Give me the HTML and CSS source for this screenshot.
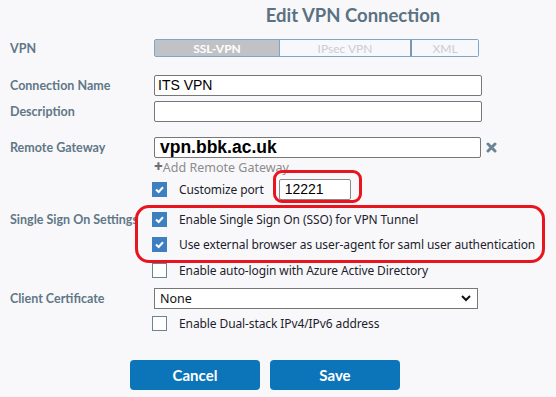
FILE: index.html
```html
<!DOCTYPE html>
<html>
<head>
<meta charset="utf-8">
<link rel="stylesheet" href="styles.css">
</head>
<body>
<div class="page">
  <h1 class="title">Edit VPN Connection</h1>

  <div class="row row-vpn">
    <div class="label">VPN</div>
    <div class="seg">
      <span class="seg-item seg-active">SSL-VPN</span>
      <span class="seg-item seg-ipsec">IPsec VPN</span>
      <span class="seg-item seg-xml">XML</span>
    </div>
  </div>

  <div class="row row-name">
    <div class="label">Connection Name</div>
    <div class="input">ITS VPN</div>
  </div>

  <div class="row row-desc">
    <div class="label">Description</div>
    <div class="input"></div>
  </div>

  <div class="row row-gw">
    <div class="label">Remote Gateway</div>
    <div class="input input-gw">vpn.bbk.ac.uk</div>
    <svg class="xicon" width="11" height="11" viewBox="0 0 11 11"><path d="M2 2 L9 9 M9 2 L2 9" stroke="#6b8595" stroke-width="3" stroke-linecap="round"/></svg>
  </div>

  <div class="row row-add">
    <div class="label"></div>
    <div class="add"><span class="plus">+</span>Add Remote Gateway</div>
  </div>

  <div class="row row-port">
    <div class="label"></div>
    <span class="cb cb-on"><svg width="15" height="15" viewBox="0 0 15 15"><path d="M4 7.5 L6.6 10 L11 5.2" fill="none" stroke="#fff" stroke-width="2"/></svg></span>
    <span class="cbtext">Customize port</span>
    <div class="input input-port">12221</div>
  </div>

  <div class="row row-sso">
    <div class="label">Single Sign On Settings</div>
    <span class="cb cb-on"><svg width="15" height="15" viewBox="0 0 15 15"><path d="M4 7.5 L6.6 10 L11 5.2" fill="none" stroke="#fff" stroke-width="2"/></svg></span>
    <span class="cbtext">Enable Single Sign On (SSO) for VPN Tunnel</span>
  </div>

  <div class="row row-ext">
    <div class="label"></div>
    <span class="cb cb-on"><svg width="15" height="15" viewBox="0 0 15 15"><path d="M4 7.5 L6.6 10 L11 5.2" fill="none" stroke="#fff" stroke-width="2"/></svg></span>
    <span class="cbtext">Use external browser as user-agent for saml user authentication</span>
  </div>

  <div class="row row-auto">
    <div class="label"></div>
    <span class="cb"></span>
    <span class="cbtext">Enable auto-login with Azure Active Directory</span>
  </div>

  <div class="row row-cert">
    <div class="label">Client Certificate</div>
    <div class="select">None<svg class="chev" width="10" height="7" viewBox="0 0 10 7"><path d="M1 1 L5 5 L9 1" fill="none" stroke="#111" stroke-width="2"/></svg></div>
  </div>

  <div class="row row-dual">
    <div class="label"></div>
    <span class="cb"></span>
    <span class="cbtext">Enable Dual-stack IPv4/IPv6 address</span>
  </div>

  <div class="buttons">
    <button class="btn">Cancel</button>
    <button class="btn">Save</button>
  </div>

  <div class="mark mark-port"></div>
  <div class="mark mark-sso"></div>
</div>
</body>
</html>
```

FILE: styles.css
```css
html, body {
  margin: 0;
  padding: 0;
  background: #f8f8fb;
  width: 556px;
  height: 397px;
  overflow: hidden;
}
.page {
  position: relative;
  width: 556px;
  height: 397px;
  font-family: "Noto Sans", sans-serif;
}
.title {
  margin: 0;
  padding: 3px 0 0 150px;
  height: 24px;
  text-align: center;
  font-family: Lato, sans-serif;
  font-weight: 700;
  font-size: 18.5px;
  line-height: 24px;
  color: #5b7282;
}
.row {
  display: flex;
  align-items: center;
  padding-left: 10px;
}
.label {
  width: 144px;
  flex: none;
  font-family: Lato, sans-serif;
  font-weight: 700;
  font-size: 12.5px;
  color: #5f7786;
  white-space: nowrap;
}
.row-vpn { margin-top: 12px; height: 18px; }
.seg {
  display: flex;
  width: 323px;
  height: 16px;
  border: 1px solid #7fa6c4;
  border-radius: 2px;
  font-family: Lato, sans-serif;
  font-size: 12px;
}
.seg-item {
  display: flex;
  align-items: center;
  justify-content: center;
  color: #c9ccd2;
  background: #f7f8fb;
}
.seg-active {
  width: 124px;
  background: #c1c2c6;
  color: #fff;
  font-weight: 700;
}
.seg-ipsec {
  width: 130px;
  border-left: 1px solid #7fa6c4;
  border-right: 2px solid #7b97ab;
}
.seg-xml { flex: 1; }

.input {
  box-sizing: border-box;
  width: 328px;
  height: 21px;
  border: 1px solid #777;
  border-radius: 2px;
  background: #fff;
  font-family: "Liberation Sans", sans-serif;
  font-size: 14px;
  line-height: 19px;
  padding-left: 3px;
  color: #000;
}
.row-name { margin-top: 18px; }
.row-desc { margin-top: 5px; }
.row-gw { margin-top: 15px; }
.input-gw {
  width: 327px;
  font-weight: 700;
  font-size: 17.5px;
  padding-left: 5px;
}
.xicon { margin-left: 5px; }
.row-add { height: 19px; }
.add {
  font-family: "Noto Sans", sans-serif;
  font-size: 12.5px;
  color: #8c8c8c;
}
.plus { font-weight: 900; color: #6e6e6e; font-size: 15px; line-height: 12px; }
.row-port { height: 24px; }
.cb {
  box-sizing: border-box;
  width: 15px;
  height: 15px;
  flex: none;
  margin-left: -2px;
  border: 1.5px solid #6d8391;
  background: #fff;
  display: flex;
}
.cb-on {
  border: none;
  background: #3e7fbf;
}
.cbtext {
  margin-left: 12px;
  font-family: "Noto Sans", sans-serif;
  font-size: 12px;
  letter-spacing: -0.1px;
  color: #1d1d2b;
  white-space: nowrap;
}
.input-port {
  width: 72px;
  height: 21px;
  margin-left: 15px;
  padding-left: 5px;
  border-color: #888;
}
.row-sso { height: 26px; margin-top: 5px; }
.row-ext { height: 27px; margin-top: -1px; }
.row-auto { height: 26px; margin-top: -1px; }
.row-cert { height: 26px; margin-top: 2px; }
.select {
  box-sizing: border-box;
  width: 324px;
  height: 21px;
  border: 1px solid #777;
  background: #fff;
  font-family: "Noto Sans", sans-serif;
  font-size: 12.5px;
  line-height: 19px;
  padding-left: 5px;
  display: flex;
  align-items: center;
  justify-content: space-between;
  padding-right: 6px;
  color: #111;
}
.row-dual { height: 26px; margin-top: -1px; }
.buttons {
  display: flex;
  gap: 10px;
  padding-left: 130px;
  margin-top: 24px;
}
.btn {
  width: 130px;
  height: 30px;
  border: none;
  border-radius: 4px;
  background: #0c74b9;
  color: #fff;
  font-family: Lato, sans-serif;
  font-weight: 700;
  font-size: 15px;
  padding: 0;
}
.mark {
  position: absolute;
  border: 3px solid #e8141e;
}
.mark-port {
  left: 273px;
  top: 170px;
  width: 83px;
  height: 27px;
  border-radius: 9px;
}
.mark-sso {
  left: 135px;
  top: 205px;
  width: 404px;
  height: 52px;
  border-radius: 14px;
}
```
